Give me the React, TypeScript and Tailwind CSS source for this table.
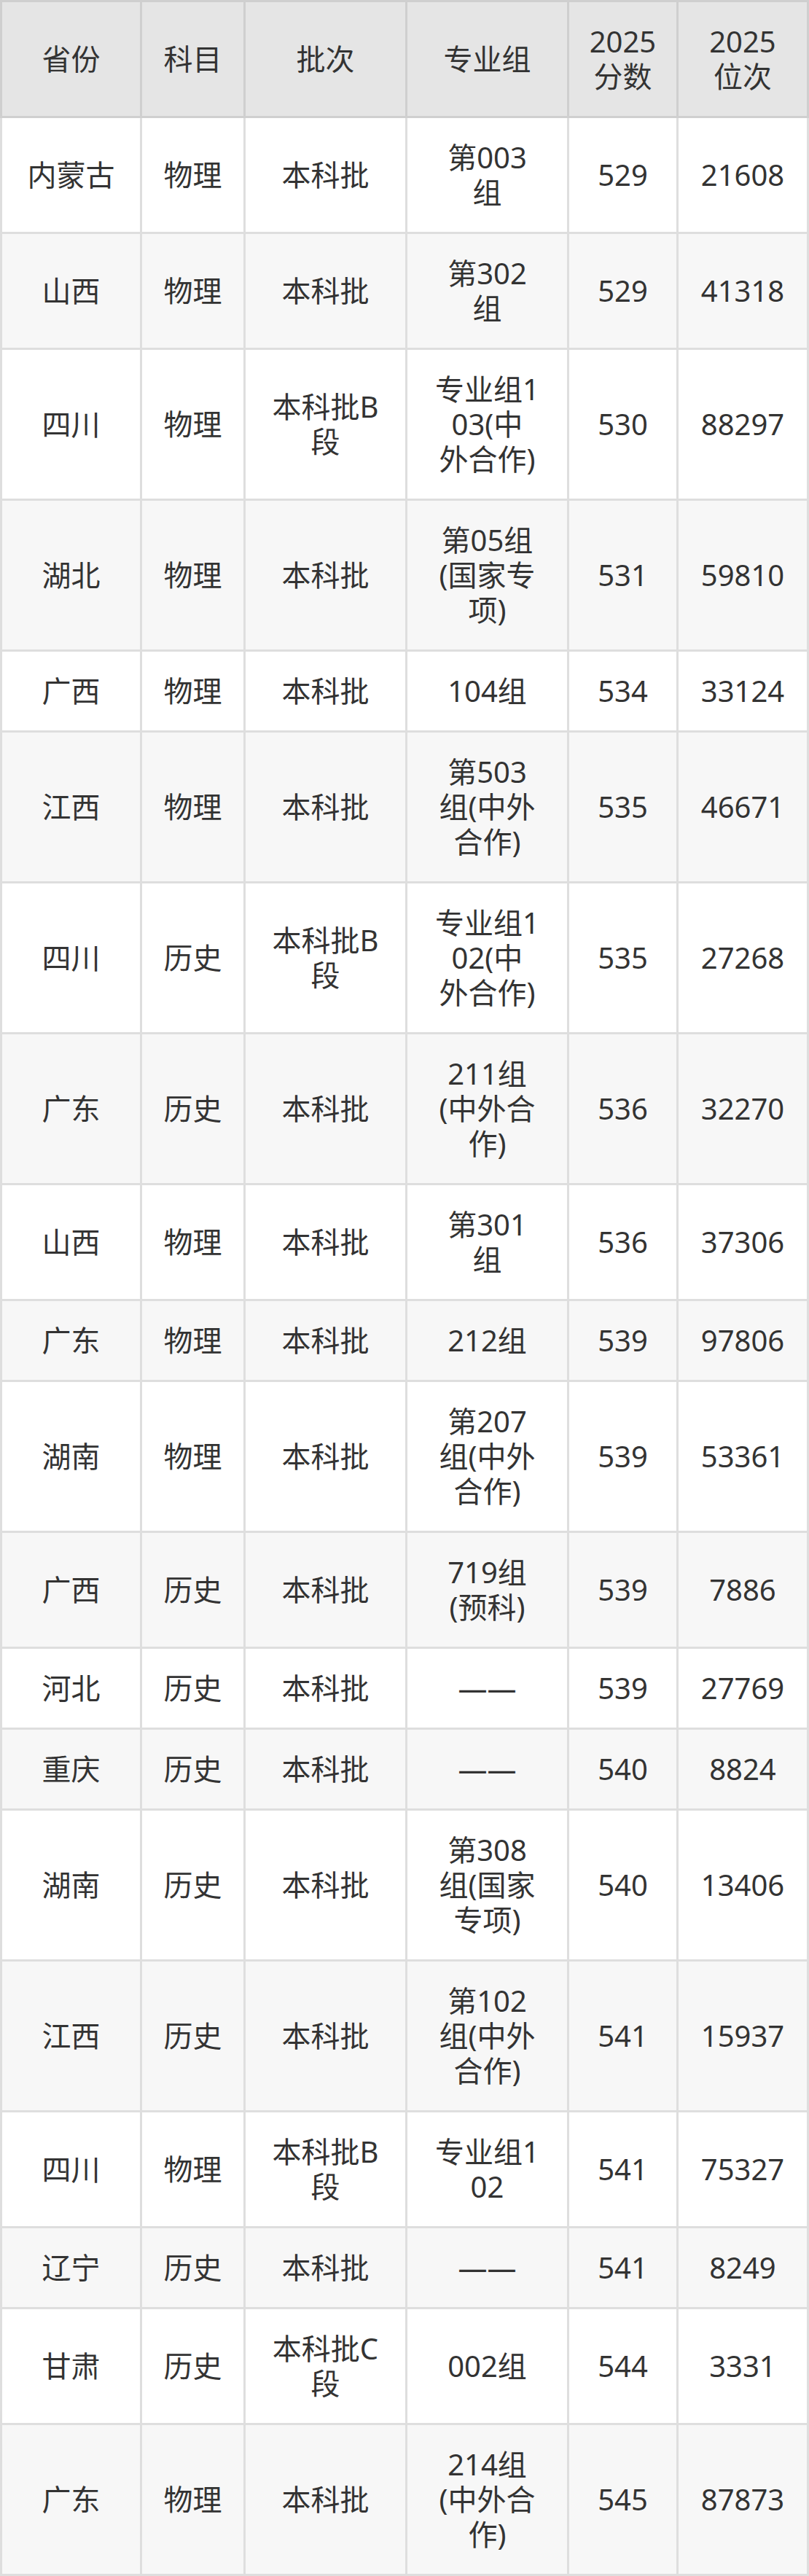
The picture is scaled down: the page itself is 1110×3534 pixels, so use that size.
const header: string[][] = [["省份"], ["科目"], ["批次"], ["专业组"], ["2025", "分数"], ["2025", "位次"]];

// each cell is a list of display lines
const rows: string[][][] = [
  [["内蒙古"], ["物理"], ["本科批"], ["第003", "组"], ["529"], ["21608"]],
  [["山西"], ["物理"], ["本科批"], ["第302", "组"], ["529"], ["41318"]],
  [["四川"], ["物理"], ["本科批B", "段"], ["专业组1", "03(中", "外合作)"], ["530"], ["88297"]],
  [["湖北"], ["物理"], ["本科批"], ["第05组", "(国家专", "项)"], ["531"], ["59810"]],
  [["广西"], ["物理"], ["本科批"], ["104组"], ["534"], ["33124"]],
  [["江西"], ["物理"], ["本科批"], ["第503", "组(中外", "合作)"], ["535"], ["46671"]],
  [["四川"], ["历史"], ["本科批B", "段"], ["专业组1", "02(中", "外合作)"], ["535"], ["27268"]],
  [["广东"], ["历史"], ["本科批"], ["211组", "(中外合", "作)"], ["536"], ["32270"]],
  [["山西"], ["物理"], ["本科批"], ["第301", "组"], ["536"], ["37306"]],
  [["广东"], ["物理"], ["本科批"], ["212组"], ["539"], ["97806"]],
  [["湖南"], ["物理"], ["本科批"], ["第207", "组(中外", "合作)"], ["539"], ["53361"]],
  [["广西"], ["历史"], ["本科批"], ["719组", "(预科)"], ["539"], ["7886"]],
  [["河北"], ["历史"], ["本科批"], ["——"], ["539"], ["27769"]],
  [["重庆"], ["历史"], ["本科批"], ["——"], ["540"], ["8824"]],
  [["湖南"], ["历史"], ["本科批"], ["第308", "组(国家", "专项)"], ["540"], ["13406"]],
  [["江西"], ["历史"], ["本科批"], ["第102", "组(中外", "合作)"], ["541"], ["15937"]],
  [["四川"], ["物理"], ["本科批B", "段"], ["专业组1", "02"], ["541"], ["75327"]],
  [["辽宁"], ["历史"], ["本科批"], ["——"], ["541"], ["8249"]],
  [["甘肃"], ["历史"], ["本科批C", "段"], ["002组"], ["544"], ["3331"]],
  [["广东"], ["物理"], ["本科批"], ["214组", "(中外合", "作)"], ["545"], ["87873"]],
];

function Lines({ lines }: { lines: string[] }) {
  return (
    <>
      {lines.map((l, i) => (
        <div key={i} className="whitespace-nowrap">
          {l}
        </div>
      ))}
    </>
  );
}

export default function App() {
  return (
    <div
      className="w-[1110px] bg-white text-[#333333]"
      style={{ fontFamily: '"Noto Sans", "Noto Sans CJK SC", sans-serif' }}
    >
      <table className="w-[1110px] table-fixed border-collapse border-[3px] border-[#cccccc] text-[40px] leading-[48px]">
        <colgroup>
          <col className="w-[192px]" />
          <col className="w-[142px]" />
          <col className="w-[222px]" />
          <col className="w-[222px]" />
          <col className="w-[150px]" />
          <col className="w-[179px]" />
        </colgroup>
        <thead>
          <tr className="bg-[#e5e5e5]">
            {header.map((h, i) => (
              <th
                key={i}
                className="border-[3px] border-[#cfcfcf] px-[6px] py-[30px] text-center align-middle font-normal"
              >
                <Lines lines={h} />
              </th>
            ))}
          </tr>
        </thead>
        <tbody>
          {rows.map((r, ri) => (
            <tr key={ri} className={ri % 2 === 0 ? "bg-white" : "bg-[#f7f7f7]"}>
              {r.map((c, ci) => (
                <td
                  key={ci}
                  className="border-[3px] border-[#dedede] px-[6px] py-[30px] text-center align-middle"
                >
                  <Lines lines={c} />
                </td>
              ))}
            </tr>
          ))}
        </tbody>
      </table>
    </div>
  );
}
